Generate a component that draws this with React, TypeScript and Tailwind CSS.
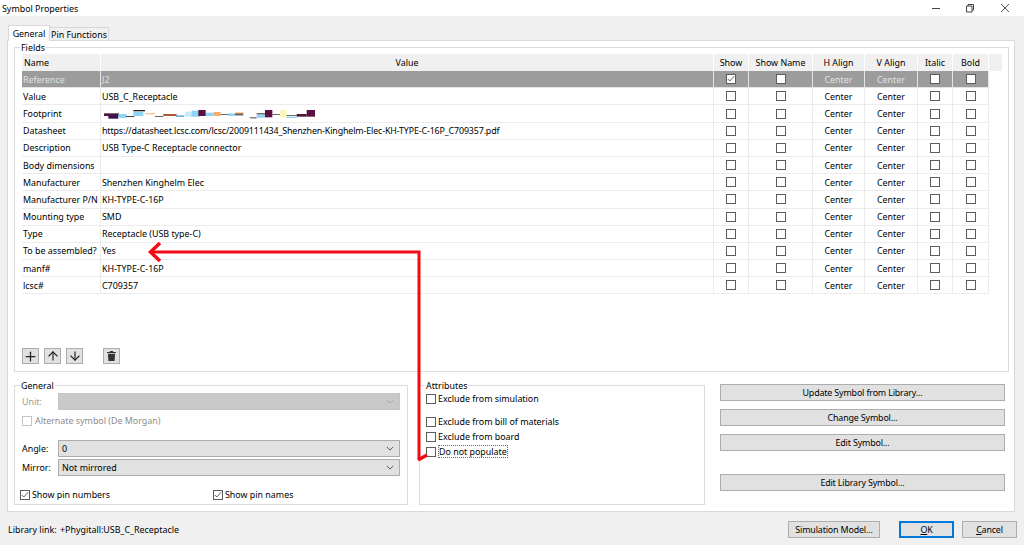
import { ArrowDown, ArrowUp, Plus } from "lucide-react";

const ROWS = [
  { name: "Reference", value: "J2" },
  { name: "Value", value: "USB_C_Receptacle" },
  { name: "Footprint", value: "" },
  { name: "Datasheet", value: "https://datasheet.lcsc.com/lcsc/2009111434_Shenzhen-Kinghelm-Elec-KH-TYPE-C-16P_C709357.pdf" },
  { name: "Description", value: "USB Type-C Receptacle connector" },
  { name: "Body dimensions", value: "" },
  { name: "Manufacturer", value: "Shenzhen Kinghelm Elec" },
  { name: "Manufacturer P/N", value: "KH-TYPE-C-16P" },
  { name: "Mounting type", value: "SMD" },
  { name: "Type", value: "Receptacle (USB type-C)" },
  { name: "To be assembled?", value: "Yes" },
  { name: "manf#", value: "KH-TYPE-C-16P" },
  { name: "lcsc#", value: "C709357" },
];

const COLS = "grid grid-cols-[79px_613px_35px_64px_52px_53px_35px_36px]";

const MAROON = "#5a1040";
const SKY = "#8fd3f5";

// x, y, w, h, colour of the scrambled footprint strip
const SCRAMBLE: [number, number, number, number, string][] = [
  [42, 40, 45, 8, "#4a1838"], [55, 46, 30, 10, "#3a1050"], [85, 42, 25, 12, SKY], [108, 48, 25, 3, "#444444"],
  [130, 30, 35, 4, "#222222"], [130, 36, 30, 12, SKY], [165, 40, 30, 3, "#f2b56b"], [195, 48, 25, 3, "#666666"],
  [220, 42, 40, 6, "#a85a30"], [258, 46, 25, 5, "#6db5e0"], [285, 35, 25, 15, "#c8ecfb"], [305, 32, 25, 18, SKY],
  [325, 30, 22, 18, MAROON], [348, 38, 25, 10, SKY], [372, 36, 20, 12, "#f0b070"], [392, 43, 25, 2, "#222222"],
  [415, 40, 20, 8, SKY], [435, 38, 25, 5, "#d98030"], [435, 43, 25, 3, "#1c2c50"], [480, 52, 20, 3, "#444444"],
  [500, 40, 25, 3, "#222222"], [500, 45, 25, 8, SKY], [525, 30, 22, 22, MAROON], [547, 43, 25, 2, "#222222"],
  [570, 30, 20, 22, "#fdf6b8"], [590, 45, 30, 2, "#222222"], [590, 50, 30, 4, SKY], [620, 42, 30, 8, "#4a1838"],
  [650, 30, 25, 20, MAROON],
];

function Check({ on = false, dim = false }: { on?: boolean; dim?: boolean }) {
  return (
    <span className={`flex h-[10px] w-[10px] shrink-0 items-center justify-center border bg-white ${dim ? "border-[#c4c4c4]" : "border-[#5c5c5c]"}`}>
      {on && (
        <svg viewBox="0 0 10 10" className="h-[8px] w-[8px]" fill="none" stroke="#333" strokeWidth="1">
          <path d="M1 5l2.500 2.500L9 1.500" />
        </svg>
      )}
    </span>
  );
}

function CheckLabel({ label, on, focus }: { label: string; on?: boolean; focus?: boolean }) {
  return (
    <div className="flex items-center gap-[2px]">
      <Check on={on} />
      <span className={focus ? "border border-dotted border-[#666] leading-[11px]" : ""}>{label}</span>
    </div>
  );
}

function Chevron({ color = "#555" }: { color?: string }) {
  return (
    <svg viewBox="0 0 10 6" className="h-[5px] w-[8px]" fill="none" stroke={color} strokeWidth="1.2">
      <path d="M1 1l4 4 4-4" />
    </svg>
  );
}

function Select({ value, disabled }: { value?: string; disabled?: boolean }) {
  return (
    <div className={`flex h-[17px] w-[342px] items-center justify-between border pl-[3px] pr-[5px] ${disabled ? "border-[#c4c4c4] bg-[#c9c9c9]" : "border-[#adadad] bg-[#e1e1e1]"}`}>
      <span>{value}</span>
      <Chevron color={disabled ? "#a8a8a8" : "#555"} />
    </div>
  );
}

function Btn({ label, primary, className = "" }: { label: React.ReactNode; primary?: boolean; className?: string }) {
  return (
    <div className={`flex h-[17px] items-center justify-center bg-[#e1e1e1] tracking-[-0.15px] ${primary ? "border-2 border-[#0078d7]" : "border border-[#adadad]"} ${className}`}>
      {label}
    </div>
  );
}

function IconBtn({ children, className = "" }: { children: React.ReactNode; className?: string }) {
  return (
    <div className={`flex h-[16px] w-[17px] items-center justify-center border border-[#adadad] bg-[#e1e1e1] ${className}`}>
      {children}
    </div>
  );
}

function FieldRow({ name, value, index }: { name: string; value: string; index: number }) {
  const selected = index === 0;
  const cell = `flex items-center border-b border-r ${selected ? "border-[#e4e4e4] bg-[#9c9c9c] text-[#e2e2e2]" : "border-[#ececec] bg-white"}`;
  return (
    <div className={`${COLS} h-[17.2px]`}>
      <div className={`${cell} pl-[1px]`}>{name}</div>
      <div className={`${cell} pl-[1px] ${name === "Datasheet" ? "tracking-[-0.14px]" : ""}`}>
        {name === "Footprint" ? (
          <svg viewBox="36 15 720 51" className="h-[17px] w-[240px] shrink-0">
            {SCRAMBLE.map(([x, y, w, h, c]) => (
              <rect key={`${x}-${y}`} x={x} y={y} width={w} height={h} fill={c} />
            ))}
          </svg>
        ) : (
          value
        )}
      </div>
      <div className={`${cell} justify-center`}><Check on={selected} /></div>
      <div className={`${cell} justify-center`}><Check /></div>
      <div className={`${cell} justify-center`}>Center</div>
      <div className={`${cell} justify-center`}>Center</div>
      <div className={`${cell} justify-center`}><Check /></div>
      <div className={`${cell} justify-center`}><Check /></div>
    </div>
  );
}

export default function App() {
  return (
    <div className="relative flex h-[545px] w-[1024px] flex-col overflow-hidden whitespace-nowrap bg-[#f0f0f0] font-['Noto_Sans',sans-serif] text-[8.9px] leading-[13px] text-black">
      {/* title bar */}
      <div className="flex h-4 items-center justify-between bg-white pl-[2px]">
        <span>Symbol Properties</span>
        <div className="flex items-center">
          <svg viewBox="0 0 10 10" className="mr-[24px] h-[10px] w-[10px]" stroke="#444" strokeWidth="1"><path d="M1 5.500h8" /></svg>
          <svg viewBox="0 0 10 10" className="mr-[25px] h-[10px] w-[10px]" fill="none" stroke="#444" strokeWidth="1"><path d="M1.500 3h5.500v6h-5.500zM3 3v-1.500h5.500v5.500h-1.500" /></svg>
          <svg viewBox="0 0 10 10" className="mr-[14px] h-[10px] w-[10px]" fill="none" stroke="#444" strokeWidth="0.9"><path d="M1 1l8 8M9 1l-8 8" /></svg>
        </div>
      </div>

      {/* tabs */}
      <div className="relative z-10 mt-[9px] flex h-4 items-end pl-2">
        <div className="flex h-4 w-[42px] items-center justify-center border border-b-0 border-[#d9d9d9] bg-white">General</div>
        <div className="flex h-[14px] w-[59px] items-center justify-center border border-l-0 border-[#d9d9d9] bg-[#f0f0f0]">Pin Functions</div>
      </div>

      {/* notebook page */}
      <div className="-mt-px ml-[7px] h-[472px] w-[1008px] border border-[#d9d9d9] bg-white pl-[6px]">
        <fieldset className="h-[331px] w-[995px] border border-[#dcdcdc] pl-[7px]">
          <legend className="-ml-[2px] h-[13px] px-px">Fields</legend>
          <div className="w-[980px]">
            <div className="flex h-[17px] bg-[#f0f0f0]">
              <div className={`${COLS} w-[967px]`}>
                {["Name", "Value", "Show", "Show Name", "H Align", "V Align", "Italic", "Bold"].map((h) => (
                  <div key={h} className={`flex items-center border-r border-white ${h === "Name" ? "pl-[2px]" : "justify-center"}`}>{h}</div>
                ))}
              </div>
            </div>
            <div className="w-[967px]">
              {ROWS.map((r, i) => (
                <FieldRow key={r.name} name={r.name} value={r.value} index={i} />
              ))}
            </div>
            <div className="mt-[54px] flex">
              <IconBtn><Plus size={15} strokeWidth={2} color="#222" /></IconBtn>
              <IconBtn className="ml-[5px]"><ArrowUp size={14} strokeWidth={2} color="#222" /></IconBtn>
              <IconBtn className="ml-[5px]"><ArrowDown size={14} strokeWidth={2} color="#222" /></IconBtn>
              <IconBtn className="ml-[20px]">
                <svg viewBox="0 0 10 11" className="h-[10px] w-[9px]" fill="#333"><path d="M3.500 0h3l.5 1h3v1.200h-10v-1.200h3zM1 3h8l-.6 8h-6.800z" /></svg>
              </IconBtn>
            </div>
          </div>
        </fieldset>

        <div className="mt-[7px] flex">
          <fieldset className="h-[126px] w-[394px] border border-[#dcdcdc] pl-[7px]">
            <legend className="-ml-[2px] h-[13px] px-px">General</legend>
            <div className="mt-px flex items-center text-[#9a9a9a]">
              <span className="w-[36px]">Unit:</span>
              <Select disabled />
            </div>
            <div className="mt-[4px] flex items-center gap-[3px] text-[#8c8c8c]">
              <Check dim />
              <span>Alternate symbol (De Morgan)</span>
            </div>
            <div className="mt-[13px] flex items-center">
              <span className="w-[36px]">Angle:</span>
              <Select value="0" />
            </div>
            <div className="mt-[2px] flex items-center">
              <span className="w-[36px]">Mirror:</span>
              <Select value="Not mirrored" />
            </div>
            <div className="mt-[12px] flex">
              <div className="-ml-[2px] w-[193px]"><CheckLabel label="Show pin numbers" on /></div>
              <CheckLabel label="Show pin names" on />
            </div>
          </fieldset>

          <fieldset className="ml-[11px] h-[126px] w-[286px] border border-[#dcdcdc] pl-[6px]">
            <legend className="-ml-px h-[13px] px-px">Attributes</legend>
            <div className="flex flex-col">
              <CheckLabel label="Exclude from simulation" />
              <div className="mt-[10px]"><CheckLabel label="Exclude from bill of materials" /></div>
              <div className="mt-[2px]"><CheckLabel label="Exclude from board" /></div>
              <div className="mt-[2px]"><CheckLabel label="Do not populate" focus /></div>
            </div>
          </fieldset>

          <div className="ml-[15px] flex w-[285px] flex-col pt-[5px]">
            <Btn label="Update Symbol from Library..." />
            <Btn label="Change Symbol..." className="mt-2" />
            <Btn label="Edit Symbol..." className="mt-2" />
            <Btn label="Edit Library Symbol..." className="mt-[23px]" />
          </div>
        </div>
      </div>

      {/* footer */}
      <div className="flex h-[33px] items-center pl-2 pr-[7px] pt-px">
        <span className="w-[52px]">Library link:</span>
        <span>+Phygitall:USB_C_Receptacle</span>
        <Btn label="Simulation Model..." className="ml-auto w-[92px]" />
        <Btn primary label={<><span className="underline">O</span>K</>} className="ml-[19px] w-[55px]" />
        <Btn label={<><span className="underline">C</span>ancel</>} className="ml-2 w-[55px]" />
      </div>

      {/* red annotation arrow drawn over the dialog */}
      <svg className="pointer-events-none absolute left-0 top-0 h-[545px] w-[1024px]" viewBox="0 0 1024 545" fill="none" stroke="#f20a14" strokeWidth="3">
        <path d="M419 459V252H151" />
        <path d="M160 243l-9.500 9 9.500 9" strokeWidth="3.500" />
        <path d="M418 460l9-5" strokeWidth="3.500" />
      </svg>
    </div>
  );
}
